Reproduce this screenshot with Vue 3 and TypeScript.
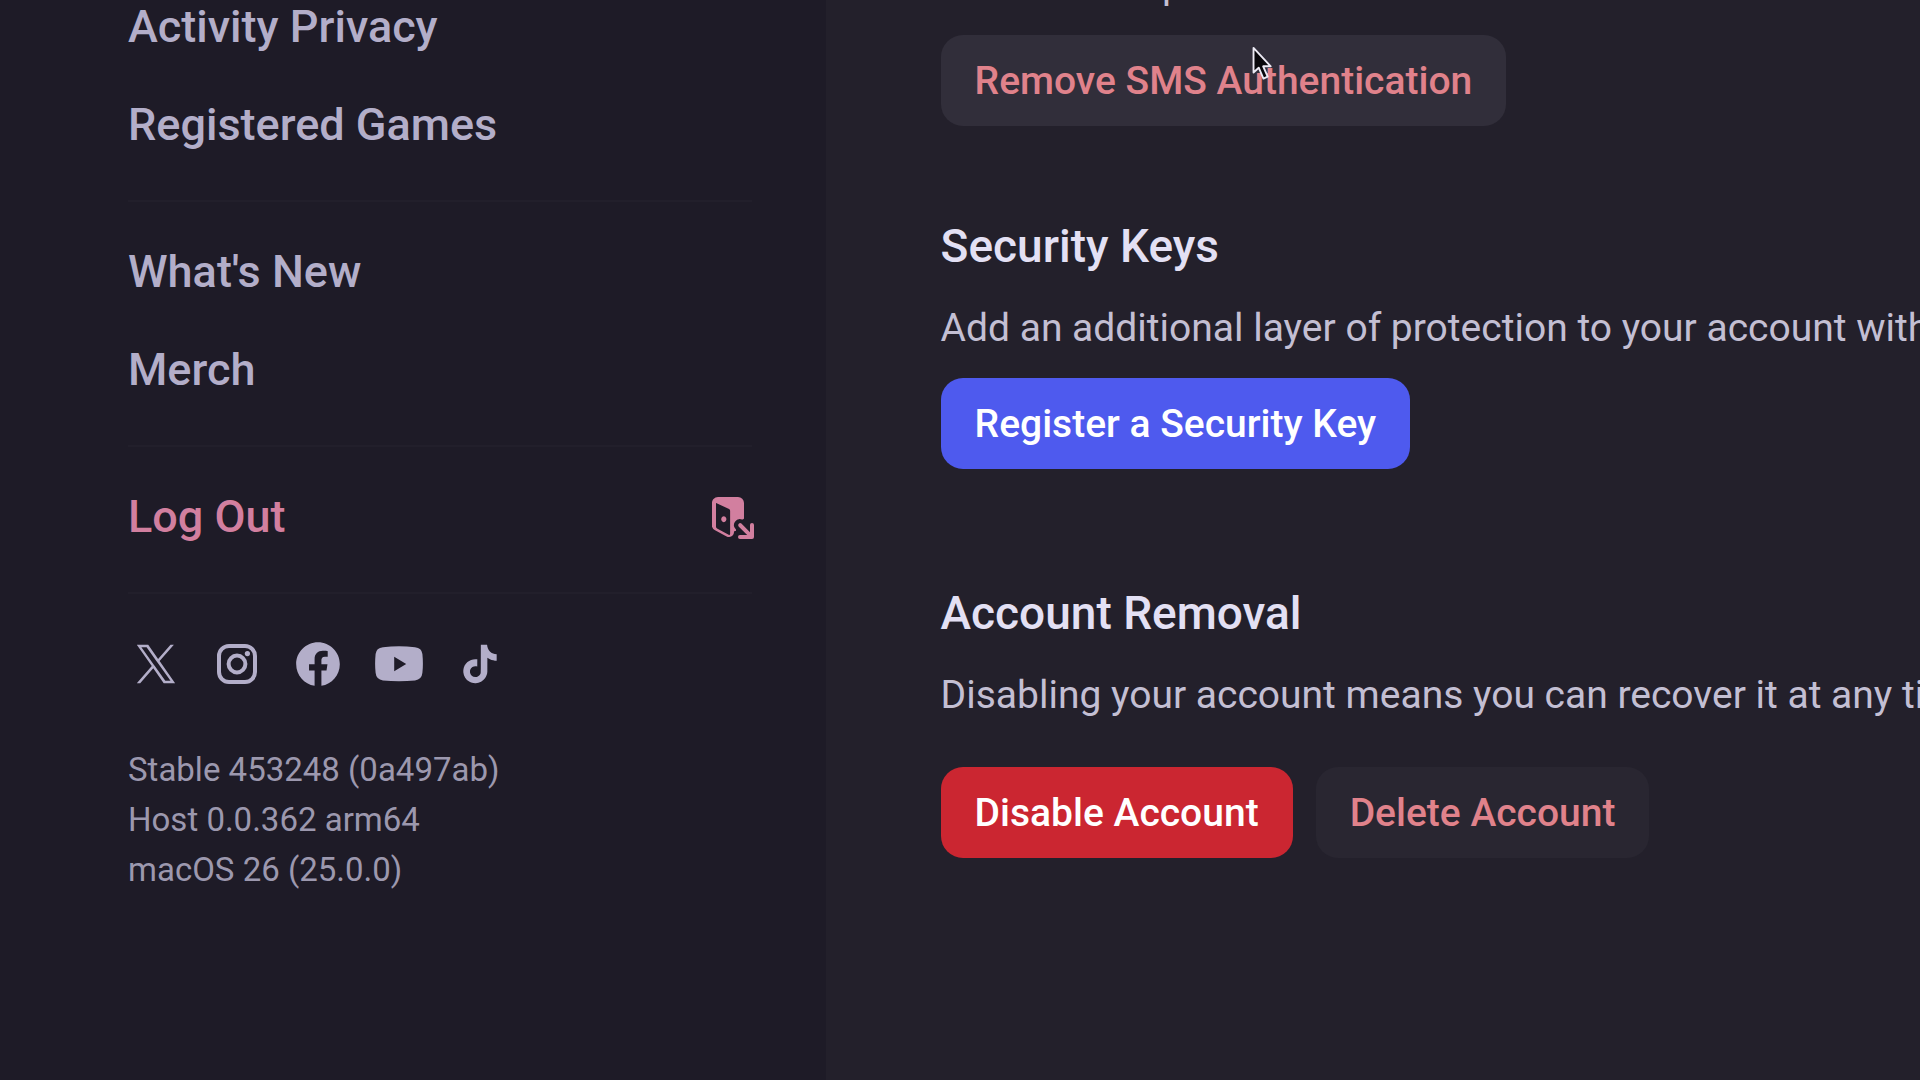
<script setup lang="ts">
interface NavItem {
  label: string
}

const activityItems: NavItem[] = [{ label: 'Activity Privacy' }, { label: 'Registered Games' }]
const linkItems: NavItem[] = [{ label: "What's New" }, { label: 'Merch' }]
const versions: string[] = ['Stable 453248 (0a497ab)', 'Host 0.0.362 arm64', 'macOS 26 (25.0.0)']
</script>

<template>
  <div class="settings">
    <aside class="sidebar">
      <nav class="group">
        <a v-for="item in activityItems" :key="item.label" class="nav-item" href="#">{{ item.label }}</a>
      </nav>
      <hr class="divider" />
      <nav class="group">
        <a v-for="item in linkItems" :key="item.label" class="nav-item" href="#">{{ item.label }}</a>
      </nav>
      <hr class="divider" />
      <button class="nav-item logout" type="button">
        <span>Log Out</span>
        <svg class="logout-icon" viewBox="0 0 24 24" aria-hidden="true">
          <path d="M9.100 12.500a1.300 1.500 0 1 1-2.400 0 1.300 1.500 0 0 1 2.400 0Z" />
          <path fill-rule="evenodd" d="M2.75 3.02A3 3 0 0 1 5 2h10a3 3 0 0 1 3 3v7.64c0 .44-.55.7-.95.55a3 3 0 0 0-3.17 4.93l.02.03a.5.5 0 0 1-.35.85h-.05a.5.5 0 0 0-.5.5 2.5 2.5 0 0 1-3.68 2.2l-5.8-3.09A3 3 0 0 1 2 16.84V5c0-.76.29-1.46.75-1.98Zm1.3 1.95A.04.04 0 0 0 4 5v11.84c0 .36.2.7.53.88l5.8 3.1a.5.5 0 0 0 .73-.45V8.92a1 1 0 0 0-.53-.89L4.05 4.97Z" />
          <path d="M15.3 16.7a1 1 0 0 1 1.4-1.4l4.3 4.29V16a1 1 0 1 1 2 0v6a1 1 0 0 1-1 1h-6a1 1 0 1 1 0-2h3.59l-4.3-4.3Z" />
        </svg>
      </button>
      <hr class="divider" />
      <div class="socials">
        <a href="#" aria-label="X">
          <svg viewBox="-3 -3 30 30"><path d="M14.258 10.152L23.176 0h-2.113l-7.747 8.813L7.133 0H0l9.352 13.328L0 23.973h2.113l8.176-9.309 6.531 9.309h7.133zm-2.895 3.293l-.949-1.328L2.875 1.56h3.246l6.086 8.523.945 1.328 7.91 11.078h-3.246zm0 0" /></svg>
        </a>
        <a href="#" aria-label="Instagram">
          <svg viewBox="0 0 24 24">
            <rect x="3" y="3" width="18" height="18" rx="5" fill="none" stroke="currentColor" stroke-width="2" />
            <circle cx="12" cy="12" r="4.2" fill="none" stroke="currentColor" stroke-width="2" />
            <circle cx="17.2" cy="6.8" r="1.3" />
          </svg>
        </a>
        <a href="#" aria-label="Facebook">
          <svg viewBox="1 1 22 22"><path d="M12 2.04C6.5 2.04 2 6.53 2 12.06C2 17.06 5.66 21.21 10.44 21.96V14.96H7.9V12.06H10.44V9.85C10.44 7.34 11.93 5.96 14.22 5.96C15.31 5.96 16.45 6.15 16.45 6.15V8.62H15.19C13.95 8.62 13.56 9.39 13.56 10.18V12.06H16.34L15.89 14.96H13.56V21.96C18.34 21.21 22 17.06 22 12.06C22 6.53 17.5 2.04 12 2.04Z" /></svg>
        </a>
        <a href="#" aria-label="YouTube">
          <svg viewBox="0 0 24 24"><path fill-rule="evenodd" d="M4 3.6Q12 2.6 20 3.6Q23.4 4 23.7 7Q24.2 12 23.7 16.4Q23.4 19.8 20 20.2Q12 21 4 20.2Q.6 19.8.3 16.4Q-.2 12 .3 7Q.6 4 4 3.6ZM9.6 8.4v7.2l6-3.6Z" /></svg>
        </a>
        <a href="#" aria-label="TikTok">
          <svg viewBox="-3 -3 30 30"><path d="M12.525.02c1.31-.02 2.61-.01 3.91-.02.08 1.53.63 3.09 1.75 4.17 1.12 1.11 2.7 1.62 4.24 1.79v4.03c-1.44-.05-2.89-.35-4.2-.97-.57-.26-1.1-.59-1.62-.93-.01 2.92.01 5.84-.02 8.75-.08 1.4-.54 2.79-1.35 3.94-1.31 1.92-3.58 3.17-5.91 3.21-1.43.08-2.86-.31-4.08-1.03-2.02-1.19-3.44-3.37-3.65-5.71-.02-.5-.03-1-.01-1.49.18-1.9 1.12-3.72 2.58-4.96 1.66-1.44 3.98-2.13 6.15-1.72.02 1.48-.04 2.96-.04 4.44-.99-.32-2.15-.23-3.02.37-.63.41-1.11 1.04-1.36 1.75-.21.51-.15 1.07-.14 1.61.24 1.64 1.82 3.02 3.5 2.87 1.12-.01 2.19-.66 2.77-1.61.19-.33.4-.67.41-1.06.1-1.79.06-3.57.07-5.36.01-4.03-.01-8.05.02-12.07z" /></svg>
        </a>
      </div>
      <div class="versions">
        <span v-for="line in versions" :key="line">{{ line }}</span>
      </div>
    </aside>

    <main class="content">
      <section>
        <p>Your current phone number is</p>
        <div class="actions">
          <button class="btn hovered" type="button">
            Remove SMS Authentication
            <svg class="pointer" viewBox="0 0 22 36" aria-hidden="true">
              <path d="M1.5 2v26l5.5-5 5 11.5 4.5-2-4.8-11h8Z" fill="#08070b" stroke="#eceaf4" stroke-width="2" stroke-linejoin="round" />
            </svg>
          </button>
        </div>
      </section>
      <section>
        <h2>Security Keys</h2>
        <p>Add an additional layer of protection to your account with</p>
        <div class="actions">
          <button class="btn primary" type="button">Register a Security Key</button>
        </div>
      </section>
      <section class="removal">
        <h2>Account Removal</h2>
        <p>Disabling your account means you can recover it at any time</p>
        <div class="actions">
          <button class="btn danger" type="button">Disable Account</button>
          <button class="btn" type="button">Delete Account</button>
        </div>
      </section>
    </main>
  </div>
</template>

<style>
body {
  background: #23202b;
}
</style>

<style scoped>
.settings {
  display: flex;
  height: 100vh;
  overflow: hidden;
  font-family: Roboto, "Liberation Sans", sans-serif;
  font-size: 39px;
  line-height: 48px;
  background: #23202b;
}

.sidebar {
  flex: 0 0 43%;
  box-sizing: border-box;
  padding: 3px 74px 0 128px;
  background: #1e1b27;
  color: #b3aec9;
}

.group {
  display: flex;
  flex-direction: column;
  gap: 50px;
}

.nav-item {
  color: inherit;
  font-size: 45px;
  font-weight: 500;
  text-decoration: none;
}

.divider {
  height: 2px;
  margin: 51px 0 46px;
  border: 0;
  background: #221f2b;
}

.logout {
  display: flex;
  align-items: center;
  justify-content: space-between;
  width: 100%;
  padding: 0;
  border: 0;
  background: none;
  color: #d27f9f;
  font-family: inherit;
  line-height: inherit;
}

.logout-icon {
  width: 48px;
  height: 48px;
  margin-right: -4px;
  fill: currentColor;
}

.socials {
  display: flex;
  gap: 33px;
  padding-left: 4px;
}

.socials a,
.socials svg {
  display: block;
  width: 48px;
  height: 48px;
  color: inherit;
  fill: currentColor;
}

.versions {
  display: flex;
  flex-direction: column;
  margin-top: 57px;
  color: #9c98ae;
  font-size: 33px;
  line-height: 50px;
}

.content {
  display: flex;
  flex: 1;
  flex-direction: column;
  gap: 96px;
  min-width: 0;
  margin-top: -39px;
  padding-left: 115px;
  color: #c3bfd3;
}

h2 {
  margin: 0 0 34px;
  color: #e3e0f4;
  font-size: 46px;
  font-weight: 500;
  line-height: 48px;
}

p {
  margin: 0 0 26px;
  white-space: nowrap;
}

.removal {
  margin-top: 24px;
}

.removal p {
  margin-bottom: 48px;
}

.actions {
  display: flex;
  gap: 23px;
}

.btn {
  position: relative;
  height: 91px;
  padding: 0 34px;
  border: 0;
  border-radius: 22px;
  background: #292631;
  color: #e0828b;
  font: inherit;
  font-weight: 500;
}

.hovered {
  background: #312e3a;
}

.primary {
  background: #4e5aee;
  color: #fff;
}

.danger {
  background: #cb2631;
  color: #fff;
}

.pointer {
  position: absolute;
  top: 11px;
  left: 311px;
  width: 21px;
  height: 34px;
}
</style>
